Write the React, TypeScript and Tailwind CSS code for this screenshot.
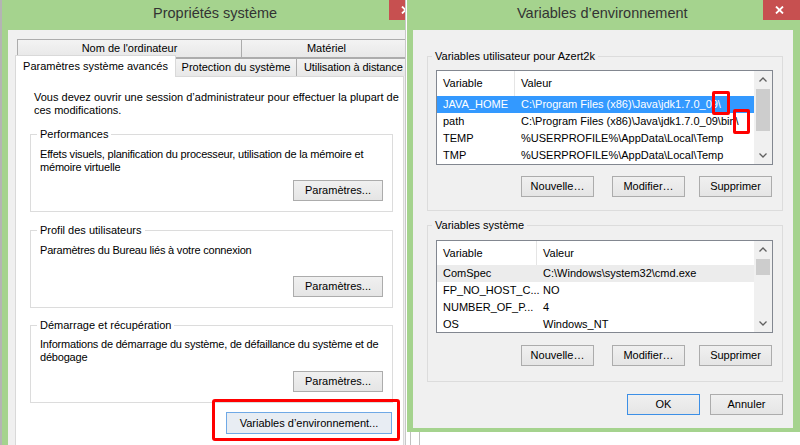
import React from "react";
import { clsx } from "clsx";
import { twMerge } from "tailwind-merge";

const cn = (...a: any[]) => twMerge(clsx(a));

type Row = { name: string; value: string; state?: "selected" | "hover" };

const userRows: Row[] = [
  { name: "JAVA_HOME", value: "C:\\Program Files (x86)\\Java\\jdk1.7.0_09\\", state: "selected" },
  { name: "path", value: "C:\\Program Files (x86)\\Java\\jdk1.7.0_09\\bin\\" },
  { name: "TEMP", value: "%USERPROFILE%\\AppData\\Local\\Temp" },
  { name: "TMP", value: "%USERPROFILE%\\AppData\\Local\\Temp" },
];

const systemRows: Row[] = [
  { name: "ComSpec", value: "C:\\Windows\\system32\\cmd.exe", state: "hover" },
  { name: "FP_NO_HOST_C...", value: "NO" },
  { name: "NUMBER_OF_P...", value: "4" },
  { name: "OS", value: "Windows_NT" },
];

const CloseBtn = ({ className }: { className?: string }) => (
  <div className={cn("h-[20px] bg-[#c75050] pl-[12px] pt-[6px] shrink-0", className)}>
    <svg width="9" height="8" viewBox="0 0 9 8">
      <path d="M1 0.5 L8 7.5 M8 0.5 L1 7.5" stroke="#fff" strokeWidth="1.8" />
    </svg>
  </div>
);

const WinButton = ({
  children,
  className,
  variant,
}: {
  children: React.ReactNode;
  className?: string;
  variant?: "default" | "focus";
}) => (
  <div
    className={cn(
      "h-[21px] flex items-center justify-center border whitespace-nowrap shrink-0",
      variant === "default" && "border-[#3c8fe6] bg-linear-to-b from-[#f0f0f0] to-[#e5e5e5]",
      variant === "focus" && "border-[#6fa9e6] bg-[#e8edf3]",
      !variant && "border-[#acacac] bg-linear-to-b from-[#f0f0f0] to-[#e5e5e5]",
      className
    )}
  >
    {children}
  </div>
);

const GroupBox = ({
  title,
  className,
  legendClass,
  children,
}: {
  title: string;
  className?: string;
  legendClass?: string;
  children: React.ReactNode;
}) => (
  <fieldset className={cn("min-w-0 border border-[#dcdcdc]", className)}>
    <legend className={cn("px-[3px] leading-[15px]", legendClass)}>{title}</legend>
    {children}
  </fieldset>
);

const Chevron = ({ up }: { up?: boolean }) => (
  <svg width="8" height="5" viewBox="0 0 8 5">
    <path d={up ? "M0.5 4.5 L4 1 L7.5 4.5" : "M0.5 0.5 L4 4 L7.5 0.5"} stroke="#606060" strokeWidth="1.3" fill="none" />
  </svg>
);

const ListView = ({
  rows,
  colClass,
  headerClass,
  heightClass,
  thumbClass,
  children,
}: {
  rows: Row[];
  colClass: string;
  headerClass: string;
  heightClass: string;
  thumbClass: string;
  children?: React.ReactNode;
}) => (
  <div className={cn("relative border border-[#828790] bg-white flex overflow-hidden shrink-0", heightClass)}>
    <div className="flex-1 min-w-0">
      <div className={cn("flex", headerClass)}>
        <div className={cn("pl-[6px] flex items-center border-r border-[#e5e5e5] shrink-0", colClass)}>Variable</div>
        <div className="pl-[6px] flex items-center">Valeur</div>
      </div>
      {rows.map((r) => (
        <div
          key={r.name}
          className={cn(
            "h-[17px] flex items-center whitespace-nowrap",
            r.state === "selected" && "bg-[#3399ff] text-white",
            r.state === "hover" && "bg-[#ececec]"
          )}
        >
          <div className={cn("pl-[6px] shrink-0", colClass)}>{r.name}</div>
          <div className="pl-[6px]">{r.value}</div>
        </div>
      ))}
    </div>
    <div className="w-[18px] shrink-0 bg-[#f0f0f0] flex flex-col">
      <div className="h-[17px] flex items-center justify-center">
        <Chevron up />
      </div>
      <div className="flex-1">
        <div className={cn("mt-[1px] mx-[2px] bg-[#cdcdcd]", thumbClass)} />
      </div>
      <div className="h-[17px] flex items-center justify-center">
        <Chevron />
      </div>
    </div>
    {children}
  </div>
);

export default function App() {
  return (
    <div className="relative w-[800px] h-[445px] flex overflow-hidden bg-white text-[11px] text-black font-['Liberation_Sans',Arial,sans-serif]">
      <div className="w-[2px] h-full bg-[#b4b4b4] shrink-0" />

      {/* Propriétés système */}
      <div className="w-[403px] h-full flex flex-col overflow-hidden shrink-0">
        <div className="h-[30px] flex bg-[#a5d38e] shrink-0">
          <div className="pl-[151px] pt-[5px] text-[14.5px] leading-[17px] text-[#333] whitespace-nowrap">
            Propriétés système
          </div>
          <CloseBtn className="ml-auto w-[16px]" />
        </div>
        <div className="flex-1 flex">
          <div className="w-[6px] bg-[#a5d38e] shrink-0" />
          <div className="flex-1 bg-[#f0f0f0] pl-[7px] pt-[9px] flex flex-col">
            <div className="flex ml-[2px] h-[19px]">
              <div className="w-[225px] shrink-0 border border-[#acacac] bg-linear-to-b from-[#f3f3f3] to-[#e8e8e8] flex items-center justify-center">
                Nom de l'ordinateur
              </div>
              <div className="w-[170px] shrink-0 border-t border-r border-b border-[#acacac] bg-linear-to-b from-[#f3f3f3] to-[#e8e8e8] flex items-center justify-center">
                Matériel
              </div>
            </div>
            <div className="flex items-end h-[21px] -mt-[3px]">
              <div className="relative z-10 w-[161px] h-[22px] -mb-px shrink-0 bg-white border-l border-t border-r border-[#d9d9d9] flex items-center justify-center">
                Paramètres système avancés
              </div>
              <div className="w-[121px] h-[18px] shrink-0 border-t border-r border-[#acacac] bg-linear-to-b from-[#f3f3f3] to-[#e8e8e8] flex items-center justify-center">
                Protection du système
              </div>
              <div className="w-[115px] h-[18px] shrink-0 border-t border-r border-[#acacac] bg-linear-to-b from-[#f3f3f3] to-[#e8e8e8] flex items-center pl-[7px] whitespace-nowrap tracking-[-0.1px]">
                Utilisation à distance
              </div>
            </div>
            <div className="w-[389px] flex-1 bg-white border-l border-t border-r border-[#d9d9d9] pl-[14px] pr-[10px] pt-[14px] flex flex-col">
              <p className="ml-[4px] leading-[13px] whitespace-nowrap">
                Vous devez ouvrir une session d’administrateur pour effectuer la plupart de
                <br />
                ces modifications.
              </p>

              <GroupBox title="Performances" className="mt-[10px]" legendClass="ml-[6px]">
                <div className="h-[69px] px-[9px] pt-[6px] pb-[10px] flex flex-col">
                  <p className="leading-[13px] whitespace-nowrap tracking-[-0.2px]">
                    Effets visuels, planification du processeur, utilisation de la mémoire et
                    <br />
                    mémoire virtuelle
                  </p>
                  <WinButton className="mt-auto self-end w-[90px]">Paramètres...</WinButton>
                </div>
              </GroupBox>

              <GroupBox title="Profil des utilisateurs" className="mt-[11px]" legendClass="ml-[6px]">
                <div className="h-[69px] px-[9px] pt-[6px] pb-[10px] flex flex-col">
                  <p className="leading-[13px] whitespace-nowrap tracking-[-0.2px]">
                    Paramètres du Bureau liés à votre connexion
                  </p>
                  <WinButton className="mt-auto self-end w-[90px]">Paramètres...</WinButton>
                </div>
              </GroupBox>

              <GroupBox title="Démarrage et récupération" className="mt-[10px]" legendClass="ml-[6px]">
                <div className="h-[69px] px-[9px] pt-[5px] pb-[10px] flex flex-col">
                  <p className="leading-[13px] whitespace-nowrap tracking-[-0.2px]">
                    Informations de démarrage du système, de défaillance du système et de
                    <br />
                    débogage
                  </p>
                  <WinButton className="mt-auto self-end w-[90px]">Paramètres...</WinButton>
                </div>
              </GroupBox>

              <WinButton variant="focus" className="mt-[9px] self-end mr-[1px] w-[166px] h-[22px]">
                Variables d’environnement...
              </WinButton>
            </div>
          </div>
        </div>
      </div>

      <div className="w-[2px] h-full bg-white border-l border-[#c8c8c8] shrink-0" />

      {/* Variables d'environnement */}
      <div className="w-[393px] flex flex-col shrink-0">
        <div className="h-[432px] flex flex-col bg-[#a5d38e] shrink-0">
          <div className="h-[30px] flex shrink-0">
            <div className="pl-[110px] pt-[5px] text-[14.5px] leading-[17px] text-[#333] whitespace-nowrap">
              Variables d’environnement
            </div>
            <CloseBtn className="ml-auto w-[37px]" />
          </div>
          <div className="flex-1 ml-[6px] mr-[7px] mb-[4px] bg-[#f0f0f0] pl-[14px] pr-[10px] pt-[19px] flex flex-col">
            <GroupBox title="Variables utilisateur pour Azert2k" legendClass="ml-[4px]">
              <div className="pl-[8px] pr-[9px] pt-[6px] pb-[13px] flex flex-col">
                <ListView
                  rows={userRows}
                  colClass="w-[78px]"
                  headerClass="h-[25px]"
                  heightClass="h-[95px]"
                  thumbClass="h-[42px]"
                >
                  <div className="absolute left-[275px] top-[20px] w-[18px] h-[24px] border-[3px] border-[#ff0000] rounded-[2px]" />
                  <div className="absolute left-[296px] top-[38px] w-[17px] h-[25px] border-[3px] border-[#ff0000] rounded-[2px]" />
                </ListView>
                <div className="mt-[11px] flex justify-end pr-[1px]">
                  <WinButton className="w-[73px] mr-[18px]">Nouvelle…</WinButton>
                  <WinButton className="w-[73px] mr-[14px]">Modifier…</WinButton>
                  <WinButton className="w-[73px]">Supprimer</WinButton>
                </div>
              </div>
            </GroupBox>

            <GroupBox title="Variables système" className="mt-[7px]" legendClass="ml-[4px]">
              <div className="pl-[8px] pr-[9px] pt-[7px] pb-[15px] flex flex-col">
                <ListView
                  rows={systemRows}
                  colClass="w-[100px]"
                  headerClass="h-[24px]"
                  heightClass="h-[93px]"
                  thumbClass="h-[16px]"
                />
                <div className="mt-[12px] flex justify-end pr-[1px]">
                  <WinButton className="w-[73px] mr-[18px]">Nouvelle…</WinButton>
                  <WinButton className="w-[73px] mr-[14px]">Modifier…</WinButton>
                  <WinButton className="w-[73px]">Supprimer</WinButton>
                </div>
              </div>
            </GroupBox>

            <div className="mt-[12px] flex justify-end">
              <WinButton variant="default" className="w-[73px] mr-[10px]">OK</WinButton>
              <WinButton className="w-[73px]">Annuler</WinButton>
            </div>
          </div>
        </div>
        <div className="flex-1 bg-white flex">
          <div className="ml-[3px] w-[10px] border-l border-r border-[#c0c0c0]" />
        </div>
      </div>

      <div className="absolute left-[212px] top-[399px] w-[188px] h-[42px] border-[3px] border-[#ff0000] rounded-[3px]" />
    </div>
  );
}
